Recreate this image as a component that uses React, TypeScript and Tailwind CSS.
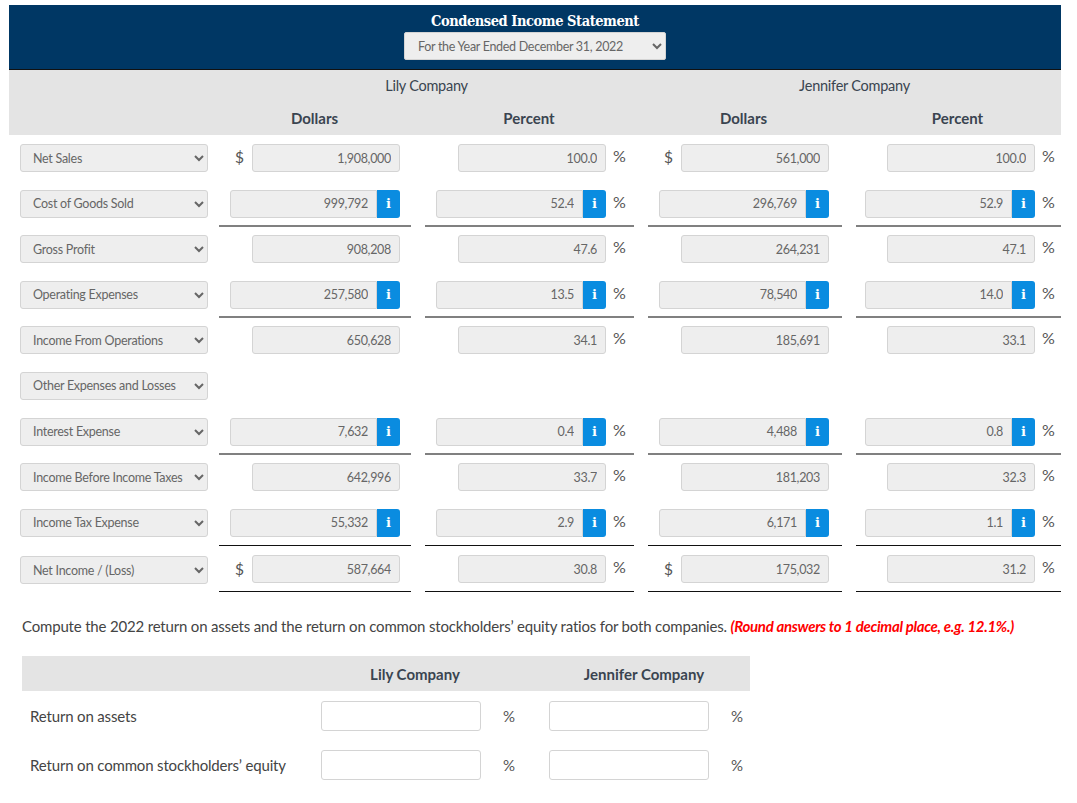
const lato = { fontFamily: 'Lato, "Open Sans", sans-serif' }

interface Cell {
  value: string
  info?: boolean
  dollar?: boolean
}

interface Row {
  label: string
  cells?: Cell[]
  line?: string
  last?: boolean
}

const grayLine = "border-b-2 border-[#808080]"
const blackLine = "border-b border-[#111]"

const rows: Row[] = [
  {
    label: "Net Sales",
    cells: [
      { value: "1,908,000", dollar: true },
      { value: "100.0" },
      { value: "561,000", dollar: true },
      { value: "100.0" },
    ],
  },
  {
    label: "Cost of Goods Sold",
    line: grayLine,
    cells: [
      { value: "999,792", info: true },
      { value: "52.4", info: true },
      { value: "296,769", info: true },
      { value: "52.9", info: true },
    ],
  },
  {
    label: "Gross Profit",
    cells: [{ value: "908,208" }, { value: "47.6" }, { value: "264,231" }, { value: "47.1" }],
  },
  {
    label: "Operating Expenses",
    line: grayLine,
    cells: [
      { value: "257,580", info: true },
      { value: "13.5", info: true },
      { value: "78,540", info: true },
      { value: "14.0", info: true },
    ],
  },
  {
    label: "Income From Operations",
    cells: [{ value: "650,628" }, { value: "34.1" }, { value: "185,691" }, { value: "33.1" }],
  },
  { label: "Other Expenses and Losses" },
  {
    label: "Interest Expense",
    line: grayLine,
    cells: [
      { value: "7,632", info: true },
      { value: "0.4", info: true },
      { value: "4,488", info: true },
      { value: "0.8", info: true },
    ],
  },
  {
    label: "Income Before Income Taxes",
    cells: [{ value: "642,996" }, { value: "33.7" }, { value: "181,203" }, { value: "32.3" }],
  },
  {
    label: "Income Tax Expense",
    line: blackLine,
    cells: [
      { value: "55,332", info: true },
      { value: "2.9", info: true },
      { value: "6,171", info: true },
      { value: "1.1", info: true },
    ],
  },
  {
    label: "Net Income / (Loss)",
    line: blackLine,
    last: true,
    cells: [
      { value: "587,664", dollar: true },
      { value: "30.8" },
      { value: "175,032", dollar: true },
      { value: "31.2" },
    ],
  },
]

// left padding of each of the 4 number columns, the right side holds the % sign
const colClass = ["pl-[11px] pr-[11px]", "pl-[11px] pr-[28px]", "pl-[11px] pr-[13px]", "pl-[9px] pr-[26px]"]
const gridCols = "grid grid-cols-[196px_192px_209px_194px_205px] gap-x-[14px]"

const NumberCell = ({ cell, col, line }: { cell: Cell; col: number; line?: string }) => {
  const isPercent = col % 2 === 1
  return (
    <div className={`flex h-[37px] items-start ${line ?? ""} ${colClass[col]}`}>
      <div className="flex w-[170px] shrink-0">
        {!cell.info && (
          <span className="flex h-7 w-[22px] shrink-0 items-center pl-[5px] text-[15.5px] text-[#555]">
            {cell.dollar ? "$" : ""}
          </span>
        )}
        <input
          readOnly
          value={cell.value}
          className={`h-7 min-w-0 flex-1 border border-[#d4d4d4] bg-[#eeeeee] px-2 text-right text-[12.5px] tracking-[-0.3px] text-[#666] outline-none ${
            cell.info ? "rounded-l-[3px]" : "rounded-[3px]"
          }`}
          style={lato}
        />
        {cell.info && (
          <span className="flex h-7 w-[23px] shrink-0 items-center justify-center rounded-r-[3px] bg-[#0a8ce0] text-[13px] font-bold text-white [font-family:'DejaVu_Serif',serif]">
            i
          </span>
        )}
      </div>
      {isPercent && <span className="ml-[7px] text-[16px] leading-6 text-[#555]">%</span>}
    </div>
  )
}

const StatementRow = ({ row }: { row: Row }) => (
  <div className={`${gridCols} ${row.last ? "h-[48px] pt-[10px]" : "h-[45.6px] pt-[9px]"}`}>
    <div className={row.last ? "pt-[1px] pl-[11px]" : "pl-[11px]"}>
      <select
        defaultValue={row.label}
        className="h-7 w-[188px] rounded-[3px] border border-[#d4d4d4] bg-[#eeeeee] pl-2 text-[12.5px] tracking-[-0.27px] text-[#666] outline-none"
        style={lato}
      >
        <option>{row.label}</option>
      </select>
    </div>
    {row.cells?.map((cell, i) => <NumberCell key={i} cell={cell} col={i} line={row.line} />)}
  </div>
)

const RatioRow = ({ label }: { label: string }) => (
  <div className="flex h-[49px] items-center">
    <div className="mt-[1px] w-[299px] pl-2 text-[15px] tracking-[-0.16px] whitespace-nowrap text-[#444]">{label}</div>
    <input className="h-[30px] w-40 rounded-[3px] border border-[#d4d4d4] bg-white" />
    <span className="mt-[1px] ml-[22px] w-[46px] text-[15px] text-[#555]">%</span>
    <input className="h-[30px] w-40 rounded-[3px] border border-[#d4d4d4] bg-white" />
    <span className="mt-[1px] ml-[22px] text-[15px] text-[#555]">%</span>
  </div>
)

export default function App() {
  return (
    <div className="min-h-[803px] bg-white pt-[5px] pr-[16px] pl-[9px]" style={lato}>
      <div className="flex h-[65px] flex-col items-center border-b border-[#111] bg-[#003764] pt-[6px]">
        <h1 className="text-[14.5px] leading-5 font-bold tracking-[-0.45px] text-white [font-family:'DejaVu_Serif',serif] [font-stretch:condensed]">
          Condensed Income Statement
        </h1>
        <select
          defaultValue="y"
          className="mt-[1px] h-7 w-[262px] rounded-[2px] border border-[#d4d4d4] bg-[#eeeeee] pl-[9px] text-[12.5px] tracking-[-0.3px] text-[#666] outline-none"
          style={lato}
        >
          <option value="y">For the Year Ended December 31, 2022</option>
        </select>
      </div>

      <div className="h-[65px] bg-[#e4e4e4] text-[#3a4450]">
        <div className={`${gridCols} h-[32px] items-center text-[14.5px] tracking-[-0.25px]`}>
          <div />
          <div className="col-span-2 text-center">Lily Company</div>
          <div className="col-span-2 text-center">Jennifer Company</div>
        </div>
        <div className={`${gridCols} h-[33px] items-center text-[15px] font-bold`}>
          <div />
          <div className="pr-[1px] text-center">Dollars</div>
          <div className="pr-[1px] text-center">Percent</div>
          <div className="pr-[3px] text-center">Dollars</div>
          <div className="pr-[2px] text-center">Percent</div>
        </div>
      </div>

      {rows.map((row) => (
        <StatementRow key={row.label} row={row} />
      ))}

      <div className="pl-[13px]">
        <p className="mt-[21px] text-[15px] leading-6 tracking-[-0.18px] whitespace-nowrap text-[#444]">
          Compute the 2022 return on assets and the return on common stockholders’ equity ratios for both companies.{" "}
          <strong className="font-bold tracking-[-0.31px] text-[#f00] italic">
            (Round answers to 1 decimal place, e.g. 12.1%.)
          </strong>
        </p>
        <div className="mt-[18px] w-[728px]">
          <div className="flex h-[35px] items-center bg-[#e4e4e4] text-[15px] font-bold text-[#3a4450]">
            <div className="w-[299px]" />
            <div className="w-[188px] text-center">Lily Company</div>
            <div className="ml-[40px] w-[190px] text-center">Jennifer Company</div>
          </div>
          <div>
            <RatioRow label="Return on assets" />
            <RatioRow label="Return on common stockholders’ equity" />
          </div>
        </div>
      </div>
    </div>
  )
}
